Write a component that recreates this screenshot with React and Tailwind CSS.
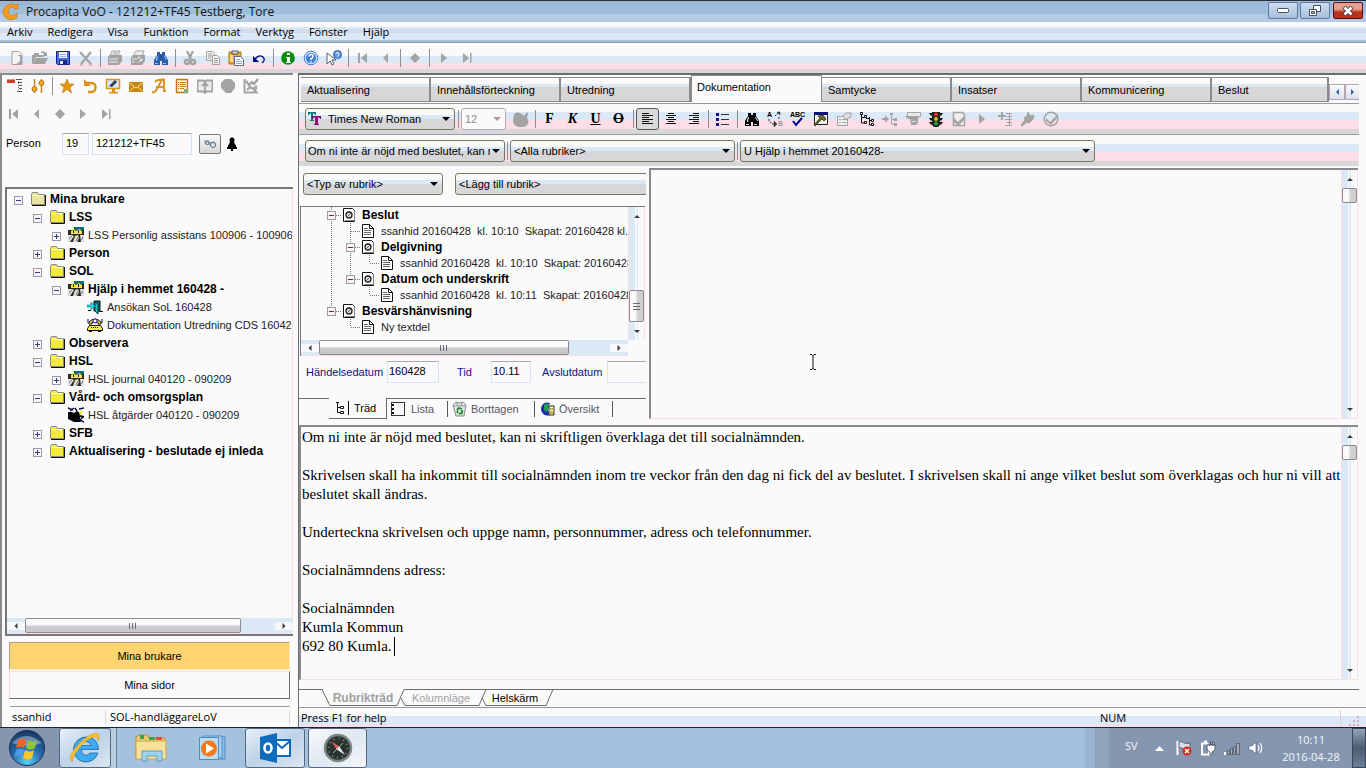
import React from "react";

const UI = "font-['Open_Sans','Noto_Sans',sans-serif]";
const G = "#a3a3a3";

function Svg({ w = 16, h = 16, box, children, className = "" }) {
  return (
    <svg width={w} height={h} viewBox={box || `0 0 ${w} ${h}`} className={"block shrink-0 " + className} aria-hidden="true">
      {children}
    </svg>
  );
}

/* ---------- toolbar drawings ---------- */
const Binoculars = ({ c = "#1f4f9a", hi = "#8fc0ec", left = "#2a5fae" }) => (
  <Svg>
    <path d="M4 2h3v2h2V2h3v3l3 5v5H9v-4H7v4H1v-5l3-5z" fill={left} />
    <path d="M3 9l1-3h1l-1 5H3zM11 6h1l2 4h-1zM2 13h3v1H2zM10 13h3v1h-3z" fill={hi} />
    <path d="M7 5h2v3H7z" fill={c} />
  </Svg>
);
const icons = {
  newDoc: <Svg><path d="M3 1.500h7l3 3v10H3z" fill="#f4f4f4" stroke={G} /><path d="M9 1v4h4v10H6l5-4V6H9z" fill={G} /></Svg>,
  open: <Svg><path d="M0 5h2V3h5v2h5v2H4l-3 7H0z" fill={G} /><path d="M4 8h12l-3 6H1z" fill={G} /><path d="M9 2q3-2 5 1l1-1v4h-4l1-2q-1-1-3-1z" fill={G} /></Svg>,
  save: <Svg><path d="M1.500 1.500h13v13h-12l-1-1z" fill="#4a6fd8" stroke="#1c1c9c" /><path d="M4 2h8v6H4z" fill="#eef3ff" /><path d="M5 4h6v1H5zM5 6h6v1H5z" fill="#9db4e8" /><path d="M4 10h8v5H4z" fill="#1b2a86" /><path d="M5 11h3v3H5z" fill="#dfe8fb" /></Svg>,
  del: <Svg><path d="M2 2l11 12M13 2L3 14" stroke={G} strokeWidth="2.200" fill="none" /><path d="M2 15h3M11 15h3" stroke={G} /></Svg>,
  print: <Svg><path d="M5 1h8l-2 5H3z" fill="#eee" stroke={G} /><path d="M6 3h5M5 5h5" stroke={G} /><path d="M1 7l2-2h12v6l-3 4H1z" fill={G} /><path d="M2 9h9M2 12h9" stroke="#eee" /></Svg>,
  preview: <Svg><path d="M6 1h8l-2 5H3z" fill="#eee" stroke={G} /><path d="M1 8l2-3h12v6l-3 4H1z" fill={G} /><path d="M2 9h9M2 12h7" stroke="#eee" /><circle cx="10" cy="9" r="3" fill="#eee" stroke={G} /><path d="M4 14l10-9" stroke={G} strokeWidth="2" /></Svg>,
  find: <Binoculars />,
  cut: <Svg><path d="M5 1l4 8M11 1L7 9" stroke={G} strokeWidth="2.200" /><circle cx="5" cy="12" r="2.200" fill="#ddd" stroke={G} strokeWidth="2.200" /><circle cx="11" cy="12" r="2.200" fill="#ddd" stroke={G} strokeWidth="2.200" /></Svg>,
  copy: <Svg><path d="M1.500 1.500h6l2 2v7h-8z" fill="#eee" stroke={G} /><path d="M3 4h4M3 6h4M3 8h3" stroke={G} /><path d="M7.500 5.500h5l2 2v7h-7z" fill="#eee" stroke={G} /><path d="M9 8.500h4M9 10.500h4M9 12.500h4" stroke={G} /></Svg>,
  paste: <Svg><path d="M1 2h12v12H1z" fill="#e4ac2c" stroke="#a87812" /><path d="M4 1h6v3H4z" fill="#d8d8d8" stroke="#555" /><path d="M2 5h3v7H2z" fill="#f8dc7c" /><path d="M6.500 6.500h6l3 3v6h-9z" fill="#fff" stroke="#5a6a88" /><path d="M8 9.500h4M8 11.500h6M8 13.500h6" stroke="#8fa5c8" /></Svg>,
  undo: <Svg><path d="M4 9q4-5 8-2 3 3-1 6" fill="none" stroke="#00007c" strokeWidth="1.300" /><path d="M2 6v6h6z" fill="#00007c" /></Svg>,
  info: <Svg><circle cx="8" cy="8" r="6.800" fill="#0a8a0a" /><path d="M7 3h3v2H7zM6 7h4v5h1v1H6v-1h1V8H6z" fill="#fff" /></Svg>,
  help: <Svg><circle cx="8" cy="8" r="6.800" fill="#e9f1fd" stroke="#3c78d0" /><circle cx="8" cy="8" r="5.200" fill="#3f7fdc" /><path d="M6 6.500q0-2 2-2t2 1.700-2 2.500V10M8 11v1.500" fill="none" stroke="#fff" strokeWidth="1.500" /></Svg>,
  whats: <Svg><path d="M1 3v11l3-3 2 4 2-1-2-4h4z" fill="#fff" stroke="#56606e" /><circle cx="11.500" cy="4.500" r="4" fill="#5d95e0" stroke="#2c62b4" /><path d="M10 4q0-1.500 1.500-1.500T13 4t-1.500 1.500M11.500 6.500v1" fill="none" stroke="#fff" /></Svg>,
  first: <Svg><path d="M3 3h2v10H3zM12 3v10L6 8z" fill={G} /></Svg>,
  prev: <Svg><path d="M10 3v10L5 8z" fill={G} /></Svg>,
  diamond: <Svg><path d="M8 3l5 5-5 5-5-5z" fill={G} /></Svg>,
  next: <Svg><path d="M5 3v10l6-5z" fill={G} /></Svg>,
  last: <Svg><path d="M4 3v10l6-5zM11 3h1.500v10H11z" fill={G} /></Svg>,

  tree: <Svg><path d="M0 1h8v4H0z" fill="#d33c2c" /><path d="M0 1h8v1H0z" fill="#f08c78" /><path d="M9 1.500h6M11 4.500h4M12 7.500h3M12 10.500h3M10 13.500h5" stroke="#55564a" /><path d="M11.500 3v11" stroke="#77786a" strokeDasharray="1 1" /></Svg>,
  sliders: <Svg><path d="M4.500 1v14M11.500 1v14" stroke="#c88418" strokeWidth="1.500" /><circle cx="4.500" cy="11" r="2.500" fill="#efa92e" stroke="#b67412" /><circle cx="11.500" cy="5" r="2.500" fill="#efa92e" stroke="#b67412" /></Svg>,
  star: <Svg><path d="M8 1l2 5h5l-4 3.500 1.500 5.500L8 11.500 3.500 15 5 9.500 1 6h5z" fill="#e0980c" stroke="#b87408" strokeWidth=".6" /></Svg>,
  back: <Svg><path d="M5 5h4q4.500 0 4.500 4.500T9 14H6" fill="none" stroke="#d9951a" strokeWidth="2.400" /><path d="M2 1v7h7z" fill="#d9951a" /></Svg>,
  screen: <Svg><path d="M1.500 1.500h13v9h-13z" fill="#d5e8fa" stroke="#d9951a" strokeWidth="1.500" /><path d="M4 8l6-6 2 2-5 5z" fill="#333d55" /><path d="M7 11h3v3h3v1.500H4V14h3z" fill="#d9951a" /></Svg>,
  mail: <Svg><path d="M1 4h14v10H1z" fill="#c98510" /><path d="M1.500 5l6.500 5 6.500-5M2 13l4-4M14 13l-4-4" fill="none" stroke="#ffe2a0" /></Svg>,
  letterA: <Svg><path d="M1 14q3 1 5-3l5-9.500h2L13 13h2M5 9h8M4 4q2-3 8-2" fill="none" stroke="#d9951a" strokeWidth="1.900" /></Svg>,
  list: <Svg><path d="M2.500 1.500h11v13h-11z" fill="#fff5d8" stroke="#c07a08" strokeWidth="1.400" /><path d="M4 4.500h1M6 4.500h6M4 6.500h1M6 6.500h6M4 8.500h1M6 8.500h6M4 10.500h1M6 10.500h4" stroke="#c07a08" /><path d="M10 11h4v4h-4z" fill="#7fae7a" /></Svg>,
  book: <Svg><path d="M.5 2.500h6L8 4l1.500-1.500h6v11h-6L8 15l-1.500-1.500h-6z" fill="#ececec" stroke={G} strokeWidth="2" /><path d="M8 4v10M5 8l3-3 3 3" stroke={G} strokeWidth="1.800" fill="none" /></Svg>,
  blob: <Svg><path d="M5 1h6l4 4v5l-4 5H6L1 10V5z" fill={G} /></Svg>,
  chart: <Svg><path d="M1.500 1v13.500H15" fill="none" stroke={G} strokeWidth="2" /><path d="M3 3l3 4 3-3 2 2 4-5M4 12l3-3 3 2 4-3" fill="none" stroke={G} strokeWidth="2.200" /><path d="M10 10l4 5M14 10l-4 5" stroke={G} strokeWidth="1.500" /></Svg>,

  palette: <Svg w={18} h={16}><path d="M2 3q4-3 8 0l2 2 3-4 1 2-1 4q4 6-3 9H7q-6-1-6-6z" fill={G} /></Svg>,
  alignL: <Svg><path d="M2 2.500h7M2 4.500h11M2 6.500h7M2 8.500h11M2 10.500h7M2 12.500h11" stroke="#111" /></Svg>,
  alignC: <Svg><path d="M5 2.500h6M3 4.500h10M5 6.500h6M3 8.500h10M5 10.500h6M3 12.500h10" stroke="#111" /></Svg>,
  alignR: <Svg><path d="M7 2.500h6M3 4.500h10M7 6.500h6M3 8.500h10M7 10.500h6M3 12.500h10" stroke="#111" /></Svg>,
  bullets: <Svg><path d="M1 2h3v3H1zM1 7h3v3H1zM1 12h3v3H1z" fill="#10108c" /><path d="M6 3.500h8M6 8.500h8M6 13.500h8" stroke="#333" /></Svg>,
  findK: <Binoculars c="#000" hi="#ddd" left="#000" />,
  replace: <Svg><text x="0" y="6" fontSize="7" fontFamily="Liberation Sans" fontWeight="700">A</text><text x="11" y="15" fontSize="7" fontFamily="Liberation Sans" fontWeight="700" fill="#999">B</text><path d="M2 8v2l3 3h3" fill="none" stroke="#333" strokeDasharray="2 1" /><path d="M7 10v6l3-3zM10 1h3v3z" fill="#333" stroke="#333" strokeWidth=".5" /><path d="M8 5l3-3M12 6v3" stroke="#333" strokeDasharray="2 1" /></Svg>,
  spell: <Svg><text x="0" y="6" fontSize="7" fontFamily="Liberation Sans" fontWeight="700">ABC</text><path d="M3 10l3 4 6-7" fill="none" stroke="#00009c" strokeWidth="2" /></Svg>,
  hammer: <Svg><path d="M1.500 2.500h13v11h-13z" fill="#f4f4ee" stroke="#222" /><path d="M1 1h14v3H1z" fill="#10107c" /><path d="M5 5l5-1 3 4-2 2-2-2-7 7-1-1 6-7z" fill="#6a681c" stroke="#222" strokeWidth=".7" /></Svg>,
  props: <Svg><path d="M1.500 5.500h10v9h-10z" fill="#eee" stroke={G} /><path d="M3 8.500h2M6 8.500h4M3 11.500h2M6 11.500h4" stroke={G} /><path d="M7 5l3-3h5v4l-3 1-2 2z" fill="#ddd" stroke={G} /></Svg>,
  treeK: <Svg><path d="M2.500 2v10h3M2.500 6.500h3M10.500 6v8h2M10.500 9.500h2M7 7.500h3" fill="none" stroke="#111" /><path d="M1.500 1.500h2v2h-2zM5.500 4.500h2v2h-2zM5.500 10.500h2v2h-2zM12.500 8.500h2v2h-2zM12.500 12.500h2v2h-2z" fill="#fff" stroke="#111" /></Svg>,
  treeG: <Svg><path d="M0 7h3V4l4 4-4 4V9H0z" fill={G} /><path d="M9.500 3v10h3M9.500 8.500h3" fill="none" stroke={G} /><path d="M8 2h3v2H8zM12 7h3v3h-3zM12 12h3v3h-3z" fill={G} /></Svg>,
  fax: <Svg><path d="M2.500 1.500h13v4h-13z" fill="#eee" stroke={G} /><path d="M0 5h14l-1 3H3zM5 8h8v4l-2 2H6z" fill={G} /><path d="M5 3.500h8M7 10.500h4" stroke="#ddd" /></Svg>,
  traffic: <Svg><path d="M1 2h3v2l-1 1zM15 2h-3v2l1 1zM1 7h3v2l-1 1zM15 7h-3v2l1 1zM1 11h3v2l-1 1zM15 11h-3v2l1 1z" fill="#111" /><path d="M4 1h8v13l-2 2H6l-2-2z" fill="#222" /><circle cx="8" cy="3.500" r="1.900" fill="#f02c1c" /><circle cx="8" cy="8" r="1.900" fill="#e2c21c" /><circle cx="8" cy="12.500" r="1.900" fill="#18b03c" /></Svg>,
  docCheck: <Svg><path d="M2.500 1.500h9l2 2v11h-11z" fill="#eee" stroke={G} strokeWidth="1.500" /><path d="M3 7l4 4 7-7v4l-7 7-4-4z" fill={G} /></Svg>,
  plusList: <Svg><path d="M4 1h2v3h3v2H6v3H4V6H1V4h3z" fill={G} /><path d="M9 2.500h6M10 5.500h5M8 8.500h7M10 11.500h5M8 14.500h7M12.500 2v13" stroke={G} /></Svg>,
  pin: <Svg><path d="M8 1l2 4 4-1-1 4-4 4-2-1-5 4-1-1 4-5-1-2 3-2z" fill={G} stroke={G} /></Svg>,
  okCircle: <Svg><circle cx="8" cy="8" r="6.800" fill="none" stroke={G} strokeWidth="1.500" /><path d="M3 7l4 4 8-8v3l-7 8-5-4z" fill={G} /></Svg>,
};

/* ---------- tree drawings ---------- */
const Folder = ({ pale }) => (
  <Svg>
    <path d="M1.500 3.500l1-2h5l1 2h6v10h-13z" fill={pale ? "#e9e4a0" : "#f3ea3c"} stroke="#8a8a7c" />
    <path d="M2.500 4.500h11" stroke="#fffde0" />
    <path d="M2 14.500h13.500V4" fill="none" stroke="#111" />
  </Svg>
);
const CaseIcon = () => (
  <Svg>
    <path d="M0 0h16v15H0z" fill="#2b2b22" />
    <path d="M0 0h6v3H0z" fill="#f4f4f4" /><path d="M7 0h9v3H7z" fill="#0d7376" />
    <path d="M3 4l3-2 2 2 3-2 3 2v3H3z" fill="#f1e443" /><path d="M5 3h1v3H5zM10 3h1v3h-1z" fill="#222" />
    <path d="M0 8h4l2 1-4 6H0zM7 9l3-1 1 3-2 4H5zM12 8h4v7h-3z" fill="#dcdcdc" />
    <path d="M1 12l3-3M8 14l2-4M13 13l2-3" stroke="#777" />
  </Svg>
);
const DoorIcon = () => (
  <Svg>
    <path d="M7 2h6v10H7z" fill="#0b6c6c" stroke="#111" /><path d="M8 3l3 2v10l-3-3z" fill="#21c2c2" stroke="#0a3a3a" />
    <path d="M0 6h4V3l4 4-4 4V8H0z" fill="#19dfe6" stroke="#0a6b73" strokeWidth=".6" /><path d="M12 12.500h4M1 11.500h3" stroke="#111" />
  </Svg>
);
const PhoneIcon = () => (
  <Svg>
    <path d="M2 5q6-6 12 0v2h-3V5H5v2H2z" fill="#f1e443" stroke="#111" /><circle cx="8" cy="4" r="2" fill="#fff" stroke="#2020a0" />
    <path d="M2.500 8.500h11l2 3v2H.5v-2z" fill="#f5ea50" stroke="#111" /><path d="M4 10.500h8" stroke="#111" strokeDasharray="1 1" /><path d="M2 14.500h3M11 14.500h3" stroke="#111" />
    <path d="M1 2v4M15 2v4" stroke="#111" />
  </Svg>
);
const PlanIcon = () => (
  <Svg>
    <path d="M0 5h4l2 1 3-2 3 2v7l1 2H6l-6-3z" fill="#050505" /><path d="M0 1l5 2M2 4l4-3M10 12l6 3M11 14l4-4M11 2l5-1M7 1l2 3" stroke="#101040" strokeWidth="1.500" />
    <path d="M11 5l3-2 1 3-3 3z" fill="#f5ea50" /><path d="M12 9l4 1" stroke="#111" strokeWidth="2" />
  </Svg>
);
const Expander = ({ open }) => (
  <Svg w={9} h={9}>
    <rect x=".5" y=".5" width="8" height="8" fill="#fdf3f6" stroke="#9a9aa0" />
    <path d={open ? "M2 4.500h5" : "M2 4.500h5M4.500 2v5"} stroke="#27408b" />
  </Svg>
);
const StepIcon = () => (
  <Svg>
    <path d="M2.500 1.500h9l2 2v11h-11z" fill="#fff" stroke="#111" /><path d="M4 13.500h9.500V4" fill="none" stroke="#888" />
    <circle cx="8" cy="8" r="3" fill="#ddd" stroke="#222" strokeWidth="1.300" /><path d="M6.500 9.500l3-3" stroke="#555" />
  </Svg>
);
const PageIcon = () => (
  <Svg>
    <path d="M2.500 1.500h7l4 4v9h-11z" fill="#fff" stroke="#111" /><path d="M9.500 1.500v4h4" fill="none" stroke="#111" />
    <path d="M4 5.500h4M4 7.500h7M4 9.500h7M4 11.500h7" stroke="#666" />
  </Svg>
);

const sideRows = [
  { l: 0, e: "open", i: <Folder pale />, t: "Mina brukare", b: true },
  { l: 1, e: "open", i: <Folder />, t: "LSS", b: true },
  { l: 2, e: "shut", i: <CaseIcon />, t: "LSS Personlig assistans 100906 - 100906" },
  { l: 1, e: "shut", i: <Folder />, t: "Person", b: true },
  { l: 1, e: "open", i: <Folder />, t: "SOL", b: true },
  { l: 2, e: "open", i: <CaseIcon />, t: "Hjälp i hemmet 160428 -", b: true },
  { l: 3, i: <DoorIcon />, t: "Ansökan SoL 160428" },
  { l: 3, i: <PhoneIcon />, t: "Dokumentation Utredning CDS 160428" },
  { l: 1, e: "shut", i: <Folder />, t: "Observera", b: true },
  { l: 1, e: "open", i: <Folder />, t: "HSL", b: true },
  { l: 2, e: "shut", i: <CaseIcon />, t: "HSL journal 040120 - 090209" },
  { l: 1, e: "open", i: <Folder />, t: "Vård- och omsorgsplan", b: true },
  { l: 2, i: <PlanIcon />, t: "HSL åtgärder 040120 - 090209" },
  { l: 1, e: "shut", i: <Folder />, t: "SFB", b: true },
  { l: 1, e: "shut", i: <Folder />, t: "Aktualisering - beslutade ej inleda", b: true },
];
const indent = ["pl-[7px]", "pl-[26px]", "pl-[45px]", "pl-[64px]"];

const docRows = [
  { g: "e", i: <StepIcon />, t: "Beslut", b: true },
  { g: "vt", i: <PageIcon />, t: "ssanhid 20160428  kl. 10:10  Skapat: 20160428 kl." },
  { g: "ve", i: <StepIcon />, t: "Delgivning", b: true },
  { g: "vvc", i: <PageIcon />, t: "ssanhid 20160428  kl. 10:10  Skapat: 20160428" },
  { g: "vE", i: <StepIcon />, t: "Datum och underskrift", b: true },
  { g: "v c", i: <PageIcon />, t: "ssanhid 20160428  kl. 10:11  Skapat: 20160428" },
  { g: "E", i: <StepIcon />, t: "Besvärshänvisning", b: true },
  { g: " c", i: <PageIcon />, t: "Ny textdel" },
];
const guide = {
  v: "M9.5 0v16",
  t: "M9.5 0v16M10 8.5h9",
  c: "M9.5 0v8M10 8.5h9",
  e: "M9.5 0v16M10 8.5h9",
  E: "M9.5 0v8M10 8.5h9",
  " ": "",
};

function Guide({ k }) {
  return (
    <Svg w={19} h={16}>
      <path d={guide[k]} stroke="#777" strokeDasharray="1 1" fill="none" />
      {(k === "e" || k === "E") && (
        <g>
          <rect x="5.500" y="4.500" width="8" height="8" fill="#fdf3f6" stroke="#9a9aa0" />
          <path d="M7 8.500h5" stroke="#27408b" />
        </g>
      )}
    </Svg>
  );
}

/* ---------- controls ---------- */
function Tool({ label, icon, pressed }) {
  return (
    <button
      type="button"
      aria-label={label}
      className={"flex h-[22px] w-[23px] shrink-0 items-center justify-center " + (pressed ? "rounded-[3px] border border-[#55585c] bg-[#d9d9dc]" : "")}
    >
      {icon}
    </button>
  );
}
const Sep = ({ narrow }) => (
  <span className={"flex shrink-0 justify-center " + (narrow ? "w-[5px]" : "w-[6px]")}>
    <span className="h-[18px] w-px bg-[#8f8f8f]" />
  </span>
);

function Combo({ label, value, className = "", pad = "pl-[3px]", muted, arrow = true, children }) {
  return (
    <span
      className={
        "relative flex h-[22px] shrink-0 items-center rounded-[3px] border " +
        (muted ? "border-[#b8a5b8] bg-[#fafafa] " : "border-[#77795f] bg-[linear-gradient(#fafafa_0_28%,#dbe8f5_28%_48%,#d7d7d9_48%)] ") + className
      }
    >
      {children}
      <select aria-label={label} className={"h-full w-full appearance-none overflow-hidden bg-transparent pr-[14px] whitespace-nowrap outline-none " + pad + (muted ? " text-[#8a8a8a]" : " text-black")}>
        <option>{value}</option>
      </select>
      {arrow && (
        <Svg w={8} h={4} className="pointer-events-none absolute top-[8px] right-[4px]">
          <path d="M0 0h8L4 4z" fill={muted ? "#b09ab0" : "#000"} />
        </Svg>
      )}
    </span>
  );
}

const Arrow = ({ d }) => (
  <Svg w={8} h={8}>
    <path d={{ up: "M1 6h6L4 3z", down: "M1 3h6L4 6z", left: "M5.5 1v6L2.500 4z", right: "M2.500 1v6l3-3z" }[d]} fill="#3c3c3c" />
  </Svg>
);

function VScroll({ thumb, grip }) {
  return (
    <div className="flex w-[17px] shrink-0 flex-col items-center border-r border-l border-[#fbdde4] bg-[linear-gradient(90deg,#dbe8f5_0_40%,#fafafa_40%_50%,#dbe8f5_50%_60%,#fafafa_60%)]">
      <span className="flex h-[18px] items-center"><Arrow d="up" /></span>
      <div className={"flex w-full flex-1 flex-col items-center " + (grip ? "justify-end" : "")}>
        <span className={"flex w-[15px] items-center justify-center rounded-[2px] border border-[#8c8c90] bg-linear-to-r from-[#fafafa] from-40% to-[#cfcfd2] to-60% " + thumb}>
          {grip && <Svg w={7} h={8}><path d="M0 1.500h7M0 4.500h7M0 7.500h7" stroke="#6a6a6e" /></Svg>}
        </span>
      </div>
      <span className="flex h-[18px] items-center"><Arrow d="down" /></span>
    </div>
  );
}
function HScroll({ thumb }) {
  return (
    <div className="flex h-[16px] shrink-0 items-center border-b border-[#fbdde4] bg-[#dbe8f5]">
      <span className="flex w-[18px] justify-center bg-[#f6f8fb]"><Arrow d="left" /></span>
      <div className="flex flex-1">
        <span className={"flex h-[15px] items-center justify-center rounded-[2px] border border-[#8c8c90] bg-linear-to-b from-[#fafafa] from-40% to-[#c9c9cd] to-60% " + thumb}>
          <Svg w={8} h={6}><path d="M.5 0v6M3.500 0v6M6.500 0v6" stroke="#6a6a6e" /></Svg>
        </span>
      </div>
      <span className="flex w-[18px] justify-center bg-[#f6f8fb]"><Arrow d="right" /></span>
    </div>
  );
}

const letter = `Om ni inte är nöjd med beslutet, kan ni skriftligen överklaga det till socialnämnden.

Skrivelsen skall ha inkommit till socialnämnden inom tre veckor från den dag ni fick del av beslutet. I skrivelsen skall ni ange vilket beslut som överklagas och hur ni vill att beslutet skall ändras.

Underteckna skrivelsen och uppge namn, personnummer, adress och telefonnummer.

Socialnämndens adress:

Socialnämnden
Kumla Kommun
692 80 Kumla.`;

const stripes = "bg-[linear-gradient(#fafafa_0_28%,#dbe8f5_28%_54%,#fcdfe6_54%_84%,#d7d7d9_84%)]";

function TitleBar() {
  const wb = "flex h-[17px] w-[30px] items-center justify-center rounded-[2px] border";
  return (
    <header className={"flex h-[22px] shrink-0 items-center border-t border-[#2c2f36] bg-[linear-gradient(#9cb6d6_0_20%,#9ebddb_20%_60%,#b4cbe8_60%)] pl-[2px] pr-[3px] " + UI}>
      <Svg w={18} h={18}>
        <path d="M16 1v5h-3Q11 3.500 8.500 4.500q-2.500 1.500-2 5 1 3.500 4.500 2.500l4-1.500v4q-3 3-8 2-6-2-6-8Q2 2 9 1q3 0 4 1z" fill="#f09c1c" stroke="#c87408" strokeWidth=".6" />
      </Svg>
      <h1 className="ml-[6px] flex-1 text-[12px] leading-[16px] text-[#111]">Procapita VoO - 121212+TF45 Testberg, Tore</h1>
      <div className="flex gap-[2px] self-start pt-px">
        <button type="button" aria-label="Minimera" className={wb + " border-[#5f7a9c] bg-linear-to-b from-[#cfdcf0] to-[#a5bfdc]"}>
          <Svg w={12} h={6}><rect x=".5" y=".5" width="11" height="4" rx="1" fill="#fff" stroke="#48505c" /></Svg>
        </button>
        <button type="button" aria-label="Återställ" className={wb + " mr-px border-[#5f7a9c] bg-linear-to-b from-[#cfdcf0] to-[#a5bfdc]"}>
          <Svg w={12} h={11}><path d="M4.500.5h7v6h-7z" fill="#fff" stroke="#48505c" /><path d="M.5 4.500h7v6h-7z" fill="#fff" stroke="#48505c" /><path d="M2.500 6.500h3v2h-3z" fill="#a5bfdc" stroke="#48505c" /></Svg>
        </button>
        <button type="button" aria-label="Stäng" className={wb + " border-[#5a0f1c] bg-linear-to-b from-[#e5a08f] from-40% to-[#b83420] to-60%"}>
          <Svg w={12} h={10}><path d="M2 1l8 8M10 1L2 9" stroke="#483840" strokeWidth="4.200" /><path d="M2.500 1.500l7 7M9.500 1.500l-7 7" stroke="#fff" strokeWidth="2.500" /></Svg>
        </button>
      </div>
    </header>
  );
}

function SidePanel() {
  return (
    <aside className="flex w-[293px] shrink-0 flex-col border-t-2 border-l-2 border-[#8a8a8c] pb-px">
      <div className="flex h-[22px] shrink-0 items-center pl-[1px]">
        <Tool label="Trädvy" icon={icons.tree} /><Tool label="Inställningar" icon={icons.sliders} /><Sep />
        <Tool label="Favoriter" icon={icons.star} /><Tool label="Tillbaka" icon={icons.back} /><Tool label="Skärm" icon={icons.screen} />
        <Tool label="Meddelande" icon={icons.mail} /><Tool label="Text" icon={icons.letterA} /><Tool label="Lista" icon={icons.list} />
        <Tool label="Bok" icon={icons.book} /><Tool label="Status" icon={icons.blob} /><Tool label="Diagram" icon={icons.chart} />
      </div>
      <div className="mt-[6px] flex h-[22px] shrink-0 items-center">
        <Tool label="Första" icon={icons.first} /><Tool label="Föregående" icon={icons.prev} /><Tool label="Aktuell" icon={icons.diamond} />
        <Tool label="Nästa" icon={icons.next} /><Tool label="Sista" icon={icons.last} />
      </div>
      <div className="mt-[8px] flex h-[22px] shrink-0 items-center pl-[4px]">
        <label htmlFor="sekel" className="w-[56px] pb-[3px]">Person</label>
        <input id="sekel" defaultValue="19" className="h-[22px] w-[27px] border border-[#d5e3f2] border-t-[#b3a3b3] bg-transparent pb-[2px] pl-[3px] outline-none" />
        <input aria-label="Personnummer" defaultValue="121212+TF45" className="ml-[3px] h-[22px] w-[100px] border border-[#d5e3f2] border-t-[#b3a3b3] bg-transparent pb-[2px] pl-[3px] outline-none" />
        <button type="button" aria-label="Sök person" className="ml-[7px] flex h-[20px] w-[22px] items-center justify-center rounded-[2px] border border-[#77796a] bg-linear-to-b from-[#fafafa] to-[#d7d7d9]">
          <Svg w={14} h={10}><path d="M1 2q3-3 6 1 4-2 6 1l-1 4q-3 2-5-2-4 1-6-2z" fill="#a9b1b8" /><circle cx="10" cy="6" r="2.500" fill="#dfe8ee" stroke="#5d6a73" /><circle cx="4.500" cy="4" r="1.500" fill="#dfe8ee" stroke="#5d6a73" /></Svg>
        </button>
        <Svg w={12} h={14} className="ml-[5px]"><circle cx="6" cy="3" r="2.500" /><path d="M4 5h4l2 4v1h1v2H7v2H5v-2H1v-2h1V9z" /></Svg>
      </div>
      <section className="mt-[32px] ml-[3px] flex min-h-0 flex-1 flex-col border-t-2 border-b-2 border-l-2 border-[#77777b]">
        <ul className="min-h-0 flex-1 overflow-hidden border-r border-[#fbdde4] pt-px">
          {sideRows.map((r, n) => (
            <li key={n} className={"flex h-[18px] items-center whitespace-nowrap " + indent[r.l]}>
              <span className="mt-[3px] w-[16px] shrink-0">{r.e && <Expander open={r.e === "open"} />}</span>
              {r.i}
              <span className={"ml-[4px] " + (r.b ? "text-[12px] font-bold" : "text-[#222]")}>{r.t}</span>
            </li>
          ))}
        </ul>
        <HScroll thumb="w-[216px]" />
      </section>
      <div className="mt-[6px] mr-[3px] ml-[7px] flex shrink-0 flex-col gap-px">
        <button type="button" className="h-[28px] border border-t-[#a8a08c] border-r-[#ffe9b0] border-b-[#ffe9b0] border-l-[#a8a08c] bg-[#fed470]">Mina brukare</button>
        <button type="button" className="h-[28px] border border-t-[#fbdde4] border-r-[#6c6c70] border-b-[#6c6c70] border-l-[#fbdde4]">Mina sidor</button>
      </div>
      <div className={"mt-[7px] mr-[3px] ml-[8px] flex h-[20px] shrink-0 items-center border-t border-[#9a9a9c] text-[11px] " + UI}>
        <span className="w-[96px] border-r border-[#d5d5d8] pl-[2px]">ssanhid</span>
        <span className="flex-1 border-r border-[#d5d5d8] pl-[4px]">SOL-handläggareLoV</span>
      </div>
    </aside>
  );
}

function DocumentTree() {
  const field = "h-[22px] border border-[#d5e3f2] border-t-[#b3a3b3] bg-transparent pb-[3px] pl-[1px] outline-none";
  return (
    <section className="mr-[3px] flex w-[347px] shrink-0 flex-col overflow-hidden">
      <div className="flex h-[40px] shrink-0 items-center gap-[12px] overflow-hidden pb-[5px] pl-[4px]">
        <Combo label="Typ av rubrik" value="<Typ av rubrik>" className="w-[140px]" />
        <Combo label="Lägg till rubrik" value="<Lägg till rubrik>" className="w-[210px]" arrow={false} />
      </div>
      <div className="mr-px ml-[1px] flex h-[134px] shrink-0 border-t border-l border-[#77777b]">
        <ul className="min-w-0 flex-1 overflow-hidden">
          {docRows.map((r, n) => (
            <li key={n} className="flex h-[16px] items-center pl-[21px] whitespace-pre">
              {[...r.g].map((k, j) => <Guide key={j} k={k} />)}
              {r.i}
              <span className={"ml-[5px] " + (r.b ? "text-[12px] font-bold" : "text-[#222]")}>{r.t}</span>
            </li>
          ))}
        </ul>
        <VScroll thumb="h-[32px]" grip />
      </div>
      <div className="mr-[18px] ml-[1px] border-l border-[#77777b]"><HScroll thumb="w-[250px]" /></div>
      <div className="mt-[5px] flex h-[22px] shrink-0 items-center pl-[7px] whitespace-nowrap text-[#10107c]">
        <label htmlFor="hd" className="w-[81px] shrink-0">Händelsedatum</label>
        <input id="hd" defaultValue="160428" className={field + " w-[52px] shrink-0 text-black"} />
        <label htmlFor="tid" className="ml-[18px] w-[34px] shrink-0">Tid</label>
        <input id="tid" defaultValue="10.11" className={field + " w-[40px] shrink-0 text-black"} />
        <label htmlFor="ad" className="ml-[11px] w-[65px] shrink-0">Avslutdatum</label>
        <input id="ad" className={field + " w-[52px] shrink-0"} />
      </div>
      <nav className="mt-[15px] flex h-[21px] shrink-0 items-stretch text-[#55585e]">
        <span className="w-[30px] border-t border-[#6c6c70]" />
        <button type="button" className="flex w-[58px] items-center border-r border-b border-[#6c6c70] pl-[7px] text-black">
          <Svg w={9} h={12}><path d="M1.500 0v10.500h3M1.500 5.500h3" fill="none" stroke="#111" /><path d="M0 .5h3M4.500 4.500h3v2h-3zM4.500 9.500h3v2h-3z" fill="#fff" stroke="#111" /></Svg>
          <span className="ml-[3px] border-l border-black pl-[5px]">Träd</span>
        </button>
        <div className="flex flex-1 items-center border-t border-[#6c6c70]">
          <button type="button" className="flex w-[60px] items-center gap-[5px] pl-[3px]">
            <Svg><path d="M1.500 1v14M1 1.500h14M1 14.500h14M14.500 1v14" stroke="#333" fill="none" /><path d="M2 3h2v2H2zM2 7h2v2H2zM2 11h2v2H2z" fill="#111" /></Svg>Lista
          </button>
          <button type="button" className="flex w-[87px] items-center gap-[3px] border-l border-[#55585e] pl-[4px]">
            <Svg><path d="M1 4l3-3 3 1 4-1 3 3-2 11H4z" fill="#e3e3e3" stroke="#8a8a8a" /><path d="M2 5h11M4 1l2 4M10 2L9 5" stroke="#9a9a9a" /><path d="M5 9l2-2 3 1M10 9v3l-3 1M5 10l1 2" fill="none" stroke="#1d8c2c" strokeWidth="1.800" /></Svg>Borttagen
          </button>
          <button type="button" className="flex w-[79px] items-center gap-[2px] border-x border-[#55585e] pl-[6px]">
            <Svg><path d="M9 2A6.500 6.500 0 1 0 9 14L6 8z" fill="#1730b0" /><path d="M3 4l4-2 1 5-3 4-2-2z" fill="#1fa04c" /><path d="M8 5h5v9H8z" fill="#fdfde8" stroke="#222" /><path d="M9 7h3v2H9zM9 10h3v3H9z" fill="#c9b927" /></Svg>Översikt
          </button>
        </div>
      </nav>
    </section>
  );
}

function SlantTab({ text, active, bold, w }) {
  return (
    <button type="button" className={"relative flex h-[15px] items-center justify-center " + w + (active ? " text-black" : " text-[#a0a0a2]") + (bold ? " text-[12px] font-bold" : "")}>
      {text}
    </button>
  );
}

const tabs = ["Aktualisering", "Innehållsförteckning", "Utredning", "Dokumentation", "Samtycke", "Insatser", "Kommunicering", "Beslut"];

function Workspace() {
  const fmt = "font-['Liberation_Serif',serif] text-[14px] leading-[16px] font-bold";
  return (
    <main className="ml-[5px] flex min-w-0 flex-1 flex-col border-t-2 border-l border-[#6c6c70]">
      <div className="mr-[7px] flex h-[29px] shrink-0 items-end border-b border-[#9a9a9c] pl-[2px]" role="tablist">
        {tabs.map((t) =>
          t === "Dokumentation" ? (
            <button key={t} type="button" role="tab" aria-selected="true" className="mb-px h-[27px] w-[131px] shrink-0 border-t border-r border-l border-[#8a8a8c] bg-[#fafafa] pb-[4px] pl-[5px] text-left">{t}</button>
          ) : (
            <button key={t} type="button" role="tab" aria-selected="false" className={"mb-px h-[25px] border-t border-r-2 border-b border-[#8a8a8c] bg-[linear-gradient(#fafafa_0_24%,#dbe8f5_24%_40%,#d7d7d9_40%)] pl-[6px] text-left " + (t === "Beslut" ? "min-w-0 flex-1 border-r-0" : "w-[130px] shrink-0")}>{t}</button>
          )
        )}
        <button type="button" aria-label="Föregående flikar" className="mb-[3px] flex h-[16px] w-[16px] shrink-0 items-center justify-center border border-[#b3a3b3] bg-linear-to-b from-[#fafafa] to-[#dbe0ea]"><Svg w={4} h={6}><path d="M4 0v6L1 3z" fill="#2b5fa8" /></Svg></button>
        <button type="button" aria-label="Nästa flikar" className="mb-[3px] flex h-[16px] w-[14px] shrink-0 items-center justify-center border border-r-0 border-[#b3a3b3] bg-linear-to-b from-[#fafafa] to-[#dbe0ea]"><Svg w={4} h={6}><path d="M0 0v6l3-3z" fill="#2b5fa8" /></Svg></button>
      </div>

      <div className={"mr-[7px] flex h-[31px] shrink-0 items-center border-b border-[#9a9a9c] pl-[6px] " + stripes}>
        <Combo label="Teckensnitt" value="Times New Roman" className="w-[150px]" pad="pl-[6px]">
          <Svg w={14} h={14} className="ml-[2px]">
            <path d="M0 0h8v3H7L6 1.500H5V8h1v1H2V8h1V1.500H2L1 3H0z" fill="#0a7d7d" /><path d="M4 4h9v3h-1l-1-1.500h-1V12h1v1H6v-1h1V5.500H6L5 7H4z" fill="#86107e" />
          </Svg>
        </Combo>
        <Sep />
        <Combo label="Storlek" value="12" className="mr-[3px] w-[45px]" muted />
        <Tool label="Färg" icon={icons.palette} /><Sep />
        <Tool label="Fet" icon={<span className={fmt}>F</span>} />
        <Tool label="Kursiv" icon={<span className={fmt + " italic"}>K</span>} />
        <Tool label="Understruken" icon={<span className={fmt + " underline"}>U</span>} />
        <Tool label="Genomstruken" icon={<span className={fmt + " line-through"}>O</span>} />
        <Sep />
        <Tool label="Vänsterjustera" icon={icons.alignL} pressed /><Tool label="Centrera" icon={icons.alignC} /><Tool label="Högerjustera" icon={icons.alignR} />
        <Sep /><Tool label="Punktlista" icon={icons.bullets} /><Sep />
        <Tool label="Sök" icon={icons.findK} /><Tool label="Ersätt" icon={icons.replace} /><Tool label="Stavning" icon={icons.spell} />
        <Tool label="Verktyg" icon={icons.hammer} /><Tool label="Egenskaper" icon={icons.props} /><Tool label="Träd" icon={icons.treeK} />
        <Tool label="Infoga i träd" icon={icons.treeG} /><Tool label="Skicka" icon={icons.fax} /><Tool label="Trafikljus" icon={icons.traffic} />
        <Tool label="Godkänn" icon={icons.docCheck} /><Tool label="Starta" icon={icons.next} /><Tool label="Lägg till" icon={icons.plusList} />
        <Tool label="Fäst" icon={icons.pin} /><Tool label="Klar" icon={icons.okCircle} />
      </div>

      <div className={"mr-[7px] flex h-[31px] shrink-0 items-center pl-[6px] " + stripes}>
        <Combo label="Frastext" value="Om ni inte är nöjd med beslutet, kan r" className="w-[200px]" pad="pl-[2px]" />
        <Sep narrow />
        <Combo label="Rubriker" value="<Alla rubriker>" className="w-[225px]" />
        <Sep narrow />
        <Combo label="Insats" value="U Hjälp i hemmet 20160428-" className="w-[355px]" pad="pl-[3px]" />
      </div>

      <div className="flex h-[253px] shrink-0">
        <DocumentTree />
        <div className="relative mt-[2px] mr-[8px] flex min-w-0 flex-1 border-t-2 border-b border-l-2 border-[#8a8a8c] border-b-[#fbdde4]">
          <textarea aria-label="Förhandsvisning" className="min-w-0 flex-1 resize-none bg-transparent outline-none" />
          <VScroll thumb="h-[15px]" />
          <Svg w={8} h={16} className="pointer-events-none absolute top-[184px] left-[158px]">
            <path d="M1 .5h2l1 1 1-1h2M4 1v14M1 15.500h2l1-1 1 1h2" stroke="#111" fill="none" />
          </Svg>
        </div>
      </div>

      <div className="relative mt-[6px] mr-[8px] flex min-h-0 flex-1 border-t-2 border-b border-l-2 border-[#8a8a8c] border-b-[#fbdde4]">
        <textarea
          aria-label="Dokumenttext"
          defaultValue={letter}
          className="min-w-0 flex-1 resize-none overflow-hidden bg-transparent py-px pl-px font-['Liberation_Serif','Times_New_Roman',serif] text-[15px] leading-[19px] text-black outline-none"
        />
        <span className="pointer-events-none absolute top-[210px] left-[93px] h-[19px] w-px bg-black" />
        <VScroll thumb="h-[15px]" />
      </div>

      <nav className="relative mt-[9px] mr-[7px] flex h-[18px] shrink-0 border-t border-[#6c6c70] pl-[24px]">
        <Svg w={270} h={18} className="absolute top-[-1px] left-0">
          <path d="M24 0h81v2H24z" fill="#fafafa" />
          <path d="M23 .5l8 16h67l7-16M102 9l4 7.500h74l7-16M183 9l4 7.500h60l7-16" fill="none" stroke="#6c6c70" />
        </Svg>
        <SlantTab text="Rubrikträd" bold w="w-[80px]" />
        <SlantTab text="Kolumnläge" w="w-[76px]" />
        <SlantTab text="Helskärm" active w="w-[72px]" />
      </nav>
      <footer className={"flex h-[20px] shrink-0 items-center border-t border-[#9a9a9c] bg-[linear-gradient(#fafafa_0_40%,#dbe8f5_40%_88%,#fcdfe6_88%)] pl-[2px] text-[11px] leading-[16px] " + UI}>
        <span className="flex-1">Press F1 for help</span>
        <span className="w-[240px]">NUM</span>
        <span className="flex h-[16px] w-[26px] items-end justify-center border-l border-[#d5d5d8]">
          <Svg w={10} h={10}><path d="M8 0h2v2H8zM8 4h2v2H8zM4 4h2v2H4zM8 8h2v2H8zM4 8h2v2H4zM0 8h2v2H0z" fill="#c3b3c3" /></Svg>
        </span>
      </footer>
    </main>
  );
}

function TaskBar() {
  const app = "flex items-center justify-center rounded-[3px] border border-[#56667c] bg-linear-to-br";
  return (
    <footer className={"flex h-[41px] shrink-0 border-t border-[#1c2430] bg-[linear-gradient(90deg,#8496b0_0_60px,#a4c1de_60px)] " + UI}>
      <button type="button" aria-label="Start" className="flex w-[59px] items-center pl-[8px]">
        <Svg w={38} h={38}>
          <defs><radialGradient id="orb" cx=".5" cy=".9" r=".9"><stop offset="0" stopColor="#5ad0f4" /><stop offset=".5" stopColor="#2568a8" /><stop offset="1" stopColor="#1b3560" /></radialGradient></defs>
          <circle cx="19" cy="19" r="17.500" fill="url(#orb)" stroke="#1c2f50" /><path d="M4 14q14-14 30 0-14 6-30 0z" fill="#fff" opacity=".35" />
          <path d="M10 11q4-3 8 0l-2 8q-4-2-8 0z" fill="#f0642c" /><path d="M20 11q5 3 9 0l-2 8q-4 3-9 0z" fill="#8cc63c" />
          <path d="M8 21q4-3 8 0l-2 7q-4-3-8 0z" fill="#4c9be8" /><path d="M17 21q5 3 9 0l-2 8q-4 3-9 0z" fill="#fcc828" />
        </Svg>
      </button>
      <button type="button" aria-label="Internet Explorer" className={app + " w-[52px] from-[#e8f0f8] via-[#bdd2e7] to-[#dbe6f2]"}>
        <Svg w={34} h={34}>
          <path d="M18 6a12.500 12.500 0 1 0 12 16h-8q-4 4.500-8 0l-1-3.500h17.500Q30 6.500 18 6zM13 14.500q1-4 5-4t5 4z" fill="#3fabee" stroke="#1666ac" strokeWidth=".8" />
          <path d="M4 31q-5-5 5-16Q20 3 28 2q5 1 2 8 0-5-4-4-6 1-14 10-8 10-8 15z" fill="#f9c02c" stroke="#d49010" strokeWidth=".5" />
        </Svg>
      </button>
      <span className="w-[6px] border-r border-[#6d8099] bg-[#b9cee2]" />
      <button type="button" aria-label="Utforskaren" className="ml-[17px] flex w-[34px] items-center">
        <Svg w={34} h={32}>
          <path d="M2 5l3-2h8l2 3h16v20H2z" fill="#eccb6c" stroke="#b8923c" /><path d="M6 3h4v4H6zM15 5h6v3h-6z" fill="#3fa04c" /><path d="M22 5h6v3h-6z" fill="#d84c3c" />
          <path d="M2 9h30v18H2z" fill="#f8e29a" stroke="#caa64c" /><path d="M8 19h20v10h-5v-5H13v5H8z" fill="#9fd4f0" stroke="#5b9cc4" />
        </Svg>
      </button>
      <button type="button" aria-label="Media Player" className="ml-[30px] flex w-[30px] items-center">
        <Svg w={30} h={28}>
          <path d="M8 3h19v22H8z" fill="#8cbce4" stroke="#4f8cc0" /><path d="M5 2h19v22H5z" fill="#a9d0ee" stroke="#4f8cc0" /><path d="M1.500 3.500h19v22h-19z" fill="#bcdcf4" stroke="#4f8cc0" />
          <circle cx="11" cy="14.500" r="8" fill="#f47a1c" /><path d="M8 9.500v10l8-5z" fill="#fff" />
        </Svg>
      </button>
      <button type="button" aria-label="Outlook" className={app + " ml-[17px] w-[60px] from-[#e8f0f8] via-[#bdd2e7] to-[#dbe6f2]"}>
        <Svg w={32} h={30}>
          <path d="M15 7h16v16H15z" fill="#fff" stroke="#0a6cc0" strokeWidth="2" /><path d="M15 8l8 7 8-7" fill="none" stroke="#0a6cc0" strokeWidth="2" />
          <path d="M1 4l17-4v30L1 26z" fill="#0f6cbd" /><ellipse cx="9" cy="15" rx="3.500" ry="4.500" fill="none" stroke="#fff" strokeWidth="2.600" />
        </Svg>
      </button>
      <button type="button" aria-label="Procapita" className={app + " ml-[3px] w-[59px] from-[#f8fafc] via-[#dfe8f1] to-[#f4f7fa]"}>
        <Svg w={30} h={30}>
          <circle cx="15" cy="15" r="13" fill="#2a3330" stroke="#7d8284" strokeWidth="2.500" /><circle cx="15" cy="15" r="9.500" fill="none" stroke="#7c8a84" strokeDasharray="1 4" strokeWidth="2" />
          <path d="M8 8l9 6-3 3z" fill="#e4584c" /><path d="M22 22l-9-6 3-3z" fill="#e9eeee" /><path d="M20 10L10 20" stroke="#9caaa8" />
        </Svg>
      </button>
      <div className="ml-auto flex items-center bg-[linear-gradient(90deg,#9ab4d3_0_10px,#8fa3bd_10px_24px,#8496b0_24px)] pl-[40px] text-[#f4f6fa]">
        <span className="w-[30px] pb-[4px] text-[11px]">SV</span>
        <button type="button" aria-label="Visa dolda ikoner" className="w-[21px]"><Svg w={9} h={5}><path d="M0 5l4.500-5L9 5z" fill="#fff" /></Svg></button>
        <div className="flex items-center gap-[8px]">
          <Svg><path d="M1.500 1v14" stroke="#fff" strokeWidth="2" /><path d="M3 2q3-1 5 1 3 1 6 0v6q-3 1-6 0-3-2-5-1z" fill="#d9dfe8" stroke="#454f60" strokeWidth=".7" /><circle cx="11" cy="11" r="4.500" fill="#d8281c" /><path d="M9 9l4 4M13 9l-4 4" stroke="#fff" strokeWidth="1.500" /></Svg>
          <Svg><path d="M2 3.500h7v11H2zM4 1.500h3" fill="none" stroke="#fff" strokeWidth="2" /><path d="M7 5h8v4q-1 3-3 3v3h-2v-3q-2-1-3-3zM9 2h1.500v3H9zM12.500 2H14v3h-1.500z" fill="#fff" stroke="#3a4558" strokeWidth=".8" /></Svg>
          <Svg><path d="M0 12h2v3H0z" fill="#fff" /><path d="M3.500 10.500h2v4h-2zM6.500 8.500h2v6h-2zM9.500 6.500h2v8h-2zM12.500 3.500h3v11h-3z" fill="#a9acb4" stroke="#4d596c" strokeWidth=".8" /></Svg>
          <Svg><path d="M1 6h3l4-4v12l-4-4H1z" fill="#fff" stroke="#4a5568" strokeWidth=".6" /><path d="M10 5q2 3 0 6M12 3q3.500 5 0 10" fill="none" stroke="#fff" strokeWidth="1.200" /></Svg>
        </div>
        <div className="ml-[10px] w-[74px] text-center text-[11px] leading-[17px]"><div>10:11</div><div>2016-04-28</div></div>
        <button type="button" aria-label="Visa skrivbordet" className="ml-[4px] h-full w-[14px] border border-[#3c4656] bg-linear-to-b from-[#93a5b8] via-[#4c5c70] to-[#6c7f98]" />
      </div>
    </footer>
  );
}

export default function App() {
  const menus = ["Arkiv", "Redigera", "Visa", "Funktion", "Format", "Verktyg", "Fönster", "Hjälp"];
  return (
    <div className="flex h-screen min-h-[640px] min-w-[1100px] flex-col overflow-hidden bg-[#fafafa] font-['Liberation_Sans',Arial,sans-serif] text-[11px] leading-[14px] text-black">
      <TitleBar />
      <nav className={"flex h-[21px] shrink-0 items-center gap-[15px] border-b border-[#9a9a9c] bg-[linear-gradient(#fafafa_0_25%,#dbe8f5_25%_35%,#d4dbee_35%_55%,#dbe8f5_55%_90%,#a5bfdc_90%)] pl-[7px] text-[11px] leading-[16px] " + UI}>
        {menus.map((m) => <button key={m} type="button">{m}</button>)}
      </nav>
      <div className="flex h-[30px] shrink-0 items-center bg-[linear-gradient(#fafafa_0_42%,#dbe8f5_42%_68%,#fcdfe6_68%_88%,#d7d7d9_88%)] pl-[5px]">
        <Tool label="Ny" icon={icons.newDoc} /><Tool label="Öppna" icon={icons.open} /><Tool label="Spara" icon={icons.save} /><Tool label="Ta bort" icon={icons.del} /><Sep />
        <Tool label="Skriv ut" icon={icons.print} /><Tool label="Granska" icon={icons.preview} /><Tool label="Sök" icon={icons.find} /><Sep />
        <Tool label="Klipp ut" icon={icons.cut} /><Tool label="Kopiera" icon={icons.copy} /><Tool label="Klistra in" icon={icons.paste} /><Tool label="Ångra" icon={icons.undo} /><Sep />
        <Tool label="Information" icon={icons.info} /><Tool label="Hjälp" icon={icons.help} /><Tool label="Förklara" icon={icons.whats} /><Sep />
        <Tool label="Första" icon={icons.first} /><Tool label="Föregående" icon={icons.prev} /><Sep />
        <Tool label="Aktuell" icon={icons.diamond} /><Sep />
        <Tool label="Nästa" icon={icons.next} /><Tool label="Sista" icon={icons.last} />
      </div>
      <div className="flex min-h-0 flex-1">
        <SidePanel />
        <Workspace />
      </div>
      <TaskBar />
    </div>
  );
}
